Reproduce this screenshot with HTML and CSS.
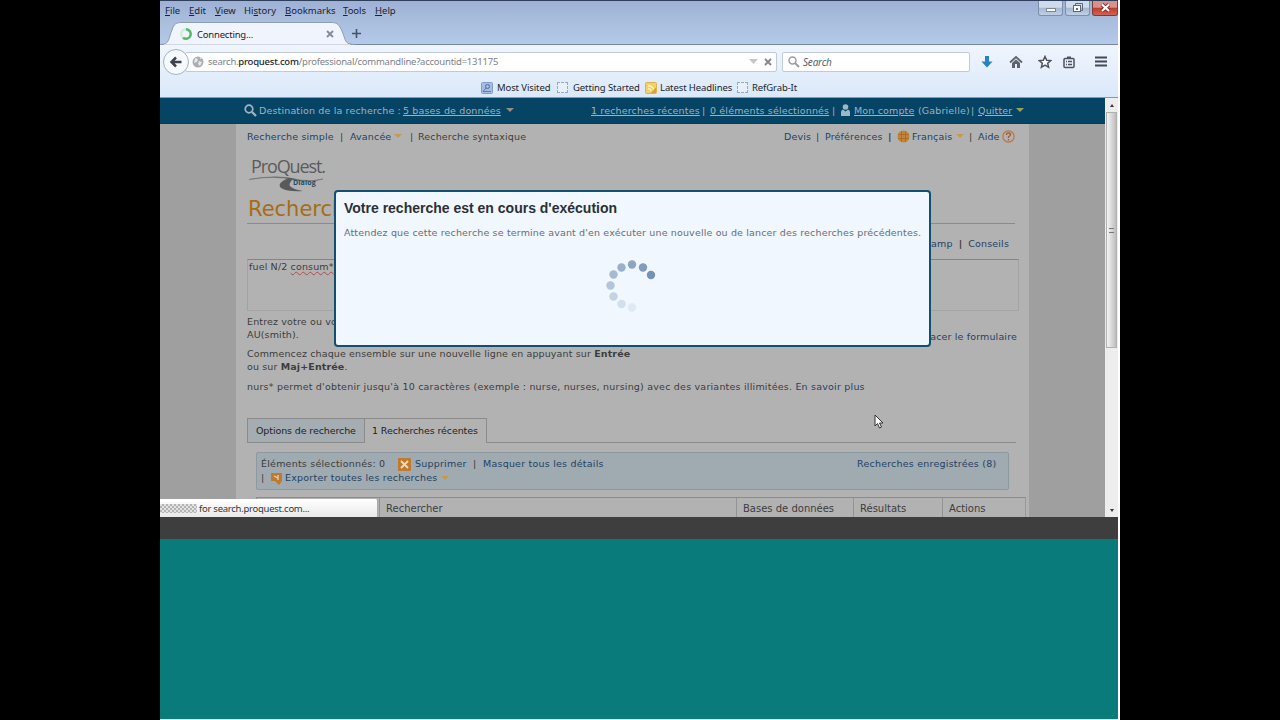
FILE: index.html
```
<!DOCTYPE html>
<html lang="fr">
<head>
    <meta charset="UTF-8">
    <title>ProQuest Dialog</title>
    <link rel="stylesheet" href="styles.css">
</head>
<body>
    <div class="screen">
        <div class="titlebar">
            <div class="menu">
                <span><u>F</u>ile</span>
                <span><u>E</u>dit</span>
                <span><u>V</u>iew</span>
                <span>Hi<u>s</u>tory</span>
                <span><u>B</u>ookmarks</span>
                <span><u>T</u>ools</span>
                <span><u>H</u>elp</span>
            </div>
            <div class="win_buttons">
                <span class="win_btn"><svg width="24" height="14"><rect x="7.500" y="7.500" width="9" height="3" fill="#fff" stroke="#7b8898"/></svg></span>
                <span class="win_btn"><svg width="24" height="14"><path d="M9.500 5V2.500h7v7H14" fill="none" stroke="#5b6878"/><rect x="7.500" y="4.500" width="7" height="6" fill="#fff" stroke="#5b6878"/><rect x="10" y="7" width="2" height="2" fill="#5b6878"/></svg></span>
                <span class="win_btn close"><svg width="25" height="14"><path d="M9 3.500l7 6.500M16 3.500l-7 6.500" stroke="#7b2c26" stroke-width="4"/><path d="M9 3.500l7 6.500M16 3.500l-7 6.500" stroke="#fff" stroke-width="2.200"/></svg></span>
            </div>
        </div>
        <div class="tabstrip">
            <svg class="tab_shape" width="195" height="23"><path d="M0 22.500C10 22.500 8 17 12 8C14 2 16 .5 22 .5H171C178 .5 179 3 182 9C186 18 184 22.500 195 22.500" fill="#f0f5fd" stroke="#8a9cb8"/><path d="M4 23h186" stroke="#f0f5fd"/></svg>
            <div class="tab">
                <svg width="14" height="14"><circle cx="7" cy="7" r="4.800" fill="none" stroke="#d3ecd9" stroke-width="2.500"/><path d="M7 2.200A4.800 4.800 0 1 1 4 10.800" fill="none" stroke="#55b96e" stroke-width="2.500"/></svg>
                <span>Connecting...</span>
                <svg width="8" height="8"><path d="M1 1l6 6M7 1L1 7" stroke="#858b96" stroke-width="1.900"/></svg>
            </div>
            <svg class="new_tab" width="9" height="9"><path d="M4.500 0v9M0 4.500h9" stroke="#465267" stroke-width="1.600"/></svg>
        </div>
        <div class="toolbar">
            <div class="back"><svg width="14" height="12"><path d="M12.500 6H3M7 1.500L2.500 6L7 10.500" fill="none" stroke="#3d434c" stroke-width="2.500"/></svg></div>
            <div class="urlbar">
                <svg width="12" height="12"><circle cx="6" cy="6" r="5.500" fill="#aaadb2"/><path d="M3 2l3 1-1 3-3 1zM7 5l3 1-2 4-2-2zM8 1l2 2-2 0z" fill="#e6e8eb"/></svg>
                <span class="url">search.<b>proquest.com</b>/professional/commandline?accountid=131175</span>
                <svg width="9" height="5"><path d="M0 0h9L4.500 5z" fill="#c3c6cb"/></svg>
                <svg class="stop" width="8" height="8"><path d="M1 1l6 6M7 1L1 7" stroke="#80858d" stroke-width="1.800"/></svg>
            </div>
            <div class="searchbar">
                <svg width="12" height="12"><circle cx="4.500" cy="4.500" r="3.500" fill="none" stroke="#999da3" stroke-width="1.500"/><path d="M7 7l4 4" stroke="#999da3" stroke-width="2"/></svg>
                <i>Search</i>
            </div>
            <div class="tools">
                <svg width="14" height="14"><path d="M5 1h4v5.500h3.500L7 12.500L1.500 6.500H5z" fill="#2684bf"/></svg>
                <svg width="14" height="14"><path d="M1 7.500L7 2l6 5.500" fill="none" stroke="#5e636b" stroke-width="1.800"/><path d="M3 8l4-3.500L11 8v5H8V9H6v4H3z" fill="#5e636b"/></svg>
                <svg width="14" height="14"><path d="M7 1.500l1.700 3.700 4 .4-3 2.700.9 4L7 10.200l-3.600 2.100.9-4-3-2.700 4-.4z" fill="#fff" stroke="#4e535b" stroke-width="1.500"/></svg>
                <svg width="14" height="14"><rect x="2" y="3.500" width="10" height="9" rx="1" fill="none" stroke="#4e535b" stroke-width="1.500"/><path d="M5 2.200h4M4 6.500h1M6 6.500h4M4 9.500h1M6 9.500h4" stroke="#4e535b" stroke-width="1.500"/></svg>
                <svg width="14" height="14"><path d="M1 2.500h12M1 6.500h12M1 10.500h12" stroke="#454a52" stroke-width="2.200"/></svg>
            </div>
        </div>
        <div class="bookmarks">
            <svg width="12" height="12"><rect x=".5" y=".5" width="11" height="11" rx="1" fill="#a5bde3" stroke="#7f9ccb"/><circle cx="6.500" cy="4.500" r="2" fill="none" stroke="#4d6c9e"/><path d="M5 6l-3 3.500h8" fill="none" stroke="#5f7dae"/></svg>
            <span>Most Visited</span>
            <i class="blank"></i>
            <span>Getting Started</span>
            <svg width="12" height="12"><rect x=".5" y=".5" width="11" height="11" rx="1" fill="#f3d063" stroke="#dcb34a"/><path d="M3 3.500a6 6 0 0 1 6 6M3 6.500a3 3 0 0 1 3 3" fill="none" stroke="#fbf0cb" stroke-width="1.300"/><path d="M5.500 11L11 5.500V11z" fill="#e0a030"/></svg>
            <span>Latest Headlines</span>
            <i class="blank"></i>
            <span>RefGrab-It</span>
        </div>

        <div class="viewport">
            <div class="content">
                <div class="topbar">
                    <svg width="13" height="13"><circle cx="5" cy="5" r="3.800" fill="none" stroke="#9fb2bf" stroke-width="1.700"/><path d="M8 8l4 4" stroke="#9fb2bf" stroke-width="2.300"/></svg>
                    <span>Destination de la recherche :</span>
                    <u>5 bases de données</u>
                    <i class="arrow"></i>
                    <u>1 recherches récentes</u>
                    <span>|</span>
                    <u>0 éléments sélectionnés</u>
                    <span>|</span>
                    <svg width="11" height="13"><circle cx="5.500" cy="3" r="2.800" fill="#9fb8c8"/><path d="M1 12V8q0-2 2-2.500l2.500 2L8 5.500q2 .5 2 2.500v4z" fill="#9fb8c8"/></svg>
                    <u>Mon compte</u>
                    <span>(Gabrielle)</span>
                    <span>|</span>
                    <u>Quitter</u>
                    <i class="arrow green"></i>
                </div>
                <div class="page">
                    <div class="links">
                        <a>Recherche simple</a><span>|</span>
                        <a>Avancée</a><i class="arrow gold"></i><span>|</span>
                        <span>Recherche syntaxique</span>
                        <a>Devis</a><span>|</span>
                        <a>Préférences</a><b>|</b>
                        <svg width="13" height="13"><circle cx="6.500" cy="6.500" r="6" fill="#c58436"/><path d="M1 4.500h11M1 8.500h11M4.500 1v11M8.500 1v11" stroke="#a5692a" stroke-width=".8"/></svg>
                        <a>Français</a><i class="arrow gold"></i><span>|</span>
                        <a>Aide</a>
                        <svg class="help" width="13" height="13"><circle cx="6.500" cy="6.500" r="5.600" fill="none" stroke="#bc7443" stroke-width="1.200"/><path d="M4.500 5q0-2 2-2t2 1.700q0 1-2 2v1.300M6.500 9v1.500" fill="none" stroke="#ad5c2b" stroke-width="1.400"/></svg>
                    </div>
                    <div class="logo">
                        <span class="brand">ProQuest.</span>
                        <svg width="76" height="18"><path d="M0 4.500Q28-1 51 5q12 2 23-1Q60 8 46 5Q26 0 0 4.500z" fill="#686868" stroke="#686868" stroke-width=".5"/><path d="M40 3Q27 8 32 13q7 4 22 3Q38 13 41 8q1-3 4-4z" fill="#585a5c"/></svg>
                        <b class="dialog">Dialog</b>
                    </div>
                    <h1>Recherche syntaxique</h1>
                    <div class="sublinks"><a>Champ</a><b>|</b><a>Conseils</a></div>
                    <div class="query">fuel N/2 <span class="typo">consum*</span></div>
                    <div class="hints">
                        <div class="hint_text">
                            <p>Entrez votre ou vos termes<br>AU(smith).</p>
                            <p class="tight">Commencez chaque ensemble sur une nouvelle ligne en appuyant sur <b>Entrée</b><br>ou sur <b>Maj+Entrée</b>.</p>
                            <p class="wide">nurs* permet d'obtenir jusqu'à 10 caractères (exemple : nurse, nurses, nursing) avec des variantes illimitées. <a>En savoir plus</a></p>
                        </div>
                        <a class="clear">Effacer le formulaire</a>
                    </div>
                    <div class="tabs">
                        <div class="t off">Options de recherche</div>
                        <div class="t on">1 Recherches récentes</div>
                        <div class="rest"></div>
                    </div>
                    <div class="actions">
                        <div class="row">
                            <span>Éléments sélectionnés: 0</span>
                            <svg width="13" height="13"><rect width="13" height="13" rx="1" fill="#c07a2c"/><path d="M3 3l7 7M10 3l-7 7" stroke="#e4dccf" stroke-width="1.800"/></svg>
                            <a>Supprimer</a>
                            <span>|</span>
                            <a>Masquer tous les détails</a>
                            <a class="saved">Recherches enregistrées (8)</a>
                        </div>
                        <div class="row second">
                            <span>|</span>
                            <svg width="12" height="13"><path d="M0 1h11v8H0z" fill="#bd7a30"/><path d="M3 4l4 2M7 3v5" stroke="#e2d2bd" stroke-width="1.300"/><path d="M4 9h7l-3 4z" fill="#bd7a30"/></svg>
                            <a>Exporter toutes les recherches</a>
                            <i class="arrow gold"></i>
                        </div>
                    </div>
                    <div class="table">
                        <span></span><span>Rechercher</span><span>Bases de données</span><span>Résultats</span><span>Actions</span>
                    </div>
                </div>
            </div>
            <div class="scrollbar">
                <i class="up"></i>
                <div class="thumb"><i></i></div>
                <i class="down"></i>
            </div>

            <div class="modal">
                <h2>Votre recherche est en cours d'exécution</h2>
                <p>Attendez que cette recherche se termine avant d'en exécuter une nouvelle ou de lancer des recherches précédentes.</p>
                <svg width="52" height="54" fill="#7492b4">
                    <circle cx="45" cy="17" r="4.200"/>
                    <circle cx="37" cy="9.500" r="4.200" opacity=".9"/>
                    <circle cx="26" cy="6.500" r="4.200" opacity=".8"/>
                    <circle cx="15.500" cy="9.500" r="4.200" opacity=".7"/>
                    <circle cx="7.500" cy="16.500" r="4.200" opacity=".6"/>
                    <circle cx="4.500" cy="27.500" r="4.200" opacity=".5"/>
                    <circle cx="7.500" cy="38.500" r="4.200" opacity=".36"/>
                    <circle cx="15.500" cy="46" r="4.200" opacity=".24"/>
                    <circle cx="26" cy="49.500" r="4.200" opacity=".14"/>
                </svg>
            </div>
            <div class="status"><i></i>for search.proquest.com...</div>
            <svg class="cursor" width="10" height="15"><path d="M1 1v11l2.500-2.500L5.500 14l2-1-2-4H9z" fill="#fff" stroke="#333"/></svg>
        </div>
        <div class="band"></div>
        <div class="desk"></div>
    </div>
</body>
</html>
```

FILE: styles.css
```
* {
    box-sizing: border-box;
}
body {
    margin: 0;
    height: 720px;
    background-color: #000;
    overflow: hidden;
}
svg {
    display: block;
    flex-shrink: 0;
}
.screen {
    width: 960px;
    height: 720px;
    margin: 0 auto;
    border-right: 2px solid #fff;
    border-bottom: 1px solid #fff;
    background-color: #b1c8e7;
    font-family: "Noto Sans", sans-serif;
    font-size: 10px;
    color: #1c222b;
    white-space: nowrap;
    overflow: hidden;
}

/* browser chrome */
.titlebar {
    height: 22px;
    border-top: 1px solid #2e3f5b;
    background: linear-gradient(#9fb1d6, #a9bedd);
    display: flex;
    justify-content: space-between;
}
.menu {
    display: grid;
    grid-template-columns: 24px 26px 29px 41px 58px 32px 30px;
    padding-left: 5px;
    line-height: 19px;
    font-size: 9.5px;
}
.win_buttons {
    display: flex;
    gap: 2px;
    height: 15px;
}
.win_btn {
    width: 25px;
    border: 1px solid #7d8fa9;
    border-top: none;
    background: linear-gradient(#cfdbeb 45%, #a5b8d1 50%, #c0d0e5);
    border-radius: 0 0 3px 3px;
}
.win_btn.close {
    width: 26px;
    border-color: #7c3a3a;
    background: linear-gradient(#d9928a 45%, #bc3b2c 50%, #d26454);
}
.tabstrip {
    position: relative;
    height: 23px;
    background: linear-gradient(#a9bedd, #b5caea);
    border-bottom: 1px solid #7387a5;
}
.tab_shape {
    position: absolute;
    left: 0;
    top: 0;
}
.tab {
    position: relative;
    width: 176px;
    height: 23px;
    padding: 1px 2px 0 19px;
    display: flex;
    align-items: center;
}
.tab span {
    flex: 1;
    margin-left: 4px;
    font-size: 9.5px;
    letter-spacing: -.2px;
}
.new_tab {
    position: absolute;
    left: 192px;
    top: 7px;
}
.toolbar {
    height: 33px;
    background: linear-gradient(#f0f5fd, #e2edfb);
    display: flex;
    align-items: center;
    padding-left: 3px;
}
.back {
    position: relative;
    width: 26px;
    height: 26px;
    border: 1px solid #a6b2c4;
    border-radius: 50%;
    background-color: #f6f9fe;
    display: flex;
    align-items: center;
    justify-content: center;
    z-index: 1;
}
.urlbar,
.searchbar {
    height: 20px;
    border: 1px solid #c1cad8;
    border-radius: 2px;
    background-color: #fff;
    display: flex;
    align-items: center;
}
.urlbar {
    width: 592px;
    margin-left: -4px;
    padding: 0 4px 0 6px;
    color: #7d8188;
}
.url {
    flex: 1;
    margin-left: 4px;
    font-size: 9.5px;
    letter-spacing: -.23px;
}
.url b {
    color: #22262c;
    font-weight: 500;
}
.stop {
    margin-left: 6px;
}
.searchbar {
    width: 188px;
    margin-left: 5px;
    padding-left: 5px;
    color: #5b6068;
}
.searchbar i {
    margin-left: 3px;
    letter-spacing: -.2px;
}
.tools {
    display: grid;
    grid-template-columns: 29px 29px 24px 32px 14px;
    margin-left: 10px;
}
.bookmarks {
    height: 20px;
    background: linear-gradient(#e2edfb, #dae8f9);
    border-bottom: 1px solid #8a97a4;
    padding-left: 321px;
    display: grid;
    grid-template-columns: 16px 60px 16px 72px 15px 77px 15px 60px;
    align-items: center;
    font-size: 9.5px;
    letter-spacing: -.1px;
    color: #22252a;
}
.blank {
    width: 11px;
    height: 11px;
    border: 1px dashed #9aa8bd;
    background-color: #e8f0fa;
}

/* page */
.viewport {
    position: relative;
    height: 419px;
    display: flex;
    overflow: hidden;
    font-family: "DejaVu Sans", sans-serif;
    font-size: 9.5px;
    letter-spacing: .15px;
}
.content {
    width: 945px;
    background-color: #9f9f9f;
}
.topbar {
    height: 26px;
    background-color: #064466;
    border-bottom: 1px solid #0b3854;
    padding: 0 0 1px 84px;
    display: grid;
    grid-template-columns: 15px 144px 103px 85px 111px 8px 122px 8px 14px 64px 53px 7px 38px 10px;
    align-items: center;
    color: #9fb2bf;
}
.arrow {
    width: 8px;
    border: 4px solid transparent;
    border-top: 4px solid #a08c74;
    border-bottom: none;
}
.arrow.green {
    border-top-color: #98a05a;
}
.arrow.gold {
    border-top-color: #c59a4c;
}
.page {
    width: 793px;
    height: 393px;
    margin-left: 76px;
    padding: 4px 12px 0 11px;
    background-color: #b2b2b2;
    color: #3d3d3d;
    overflow: hidden;
}
a {
    color: #1f4263;
}
.links {
    height: 16px;
    display: grid;
    grid-template-columns: 93px 10px 44px 16px 8px 366px 32px 9px 63px 9px 15px 44px 13px 9px 24px 13px;
    align-items: center;
}
.logo {
    position: relative;
    height: 47px;
    padding-top: 9px;
}
.brand {
    display: block;
    width: 80px;
    padding-left: 4px;
    font: 18px/26px "Open Sans", sans-serif;
    letter-spacing: -1.1px;
    color: #5c5c5c;
}
.logo svg {
    position: absolute;
    left: 2px;
    top: 31px;
}
.dialog {
    position: absolute;
    left: 46px;
    top: 34px;
    font: bold 7px/10px "Open Sans", sans-serif;
    color: #1c4c61;
}
h1 {
    width: 768px;
    height: 33px;
    margin: 0;
    padding: 5px 0 0 1px;
    border-bottom: 1px solid #8b8b8b;
    font-size: 21px;
    line-height: 26px;
    font-weight: normal;
    letter-spacing: 0;
    color: #a66d16;
}
.sublinks {
    height: 35px;
    display: flex;
    justify-content: flex-end;
    gap: 6px;
    padding-right: 8px;
    line-height: 39px;
}
.query {
    width: 772px;
    height: 52px;
    border: 1px solid #a3a3a3;
    border-top-color: #858585;
    padding-left: 1px;
    line-height: 14px;
}
.typo {
    text-decoration: underline wavy #b04a4a 1px;
}
.hints {
    height: 107px;
    padding-top: 4px;
    display: flex;
    justify-content: space-between;
    line-height: 13px;
}
.hints p {
    margin: 0 0 6px;
}
.hints .tight {
    letter-spacing: .13px;
    margin-bottom: 7px;
}
.hints .wide {
    letter-spacing: .21px;
}
.clear {
    margin-top: 15px;
}
.hint_text {
    width: 640px;
}
.tabs {
    display: flex;
    height: 25px;
    line-height: 23px;
    letter-spacing: -.11px;
    color: #222;
}
.t {
    border: 1px solid #8b8b8b;
}
.off {
    width: 118px;
    padding-left: 8px;
    background-color: #a5adb3;
}
.on {
    width: 122px;
    padding-left: 7px;
    border-bottom: none;
    border-left: none;
}
.rest {
    width: 529px;
    border-bottom: 1px solid #8b8b8b;
}
.actions {
    width: 753px;
    height: 38px;
    margin: 9px 0 7px 9px;
    padding: 4px 0 0 4px;
    border: 1px solid #8d989f;
    border-radius: 2px;
    background-color: #9faab1;
    line-height: 14px;
    letter-spacing: .22px;
}
.row {
    height: 14px;
    display: grid;
    grid-template-columns: 137px 17px 58px 10px 374px 150px;
    align-items: center;
}
.row.second {
    grid-template-columns: 10px 14px 156px 10px;
}
.table {
    width: 770px;
    margin-left: 9px;
    height: 24px;
    border: 1px solid #8b8b8b;
    border-right-color: #999;
    display: grid;
    grid-template-columns: 123px 357px 117px 89px 82px;
    line-height: 21px;
    font-size: 10px;
    letter-spacing: 0;
}
.table span {
    padding-left: 6px;
    border-right: 1px solid #939393;
}
.table span:last-child {
    border-right: none;
}
.scrollbar {
    width: 13px;
    background-color: #ededed;
    display: flex;
    flex-direction: column;
    align-items: center;
}
.up,
.down {
    margin-top: 6px;
    border: 2.5px solid transparent;
    border-top: none;
    border-bottom: 3px solid #333;
}
.down {
    margin-top: auto;
    margin-bottom: 5px;
    border-top: 3px solid #333;
    border-bottom: none;
}
.thumb {
    width: 11px;
    height: 236px;
    margin-top: 5px;
    border: 1px solid #b0b0b0;
    background: linear-gradient(90deg, #f4f4f4, #d9d9d9 50%, #bcbcbc);
    display: flex;
    align-items: center;
    justify-content: center;
}
.thumb i {
    width: 5px;
    height: 5px;
    border: 1px solid #777;
    border-width: 1px 0;
}

.modal {
    position: absolute;
    left: 174px;
    top: 92px;
    width: 597px;
    height: 157px;
    padding: 8px 8px 0;
    border: 2px solid #11506f;
    border-radius: 4px;
    background-color: #f0f7fe;
}
.modal h2 {
    margin: 0;
    font: bold 14px/16px "Liberation Sans", sans-serif;
    letter-spacing: 0;
    color: #2c2f35;
}
.modal p {
    margin: 10px 0 0;
    line-height: 13px;
    color: #696e75;
}
.modal svg {
    margin: 19px 0 0 262px;
}
.status {
    position: absolute;
    left: 0;
    bottom: 0;
    width: 218px;
    height: 18px;
    padding-top: 1px;
    background: linear-gradient(#fff, #e9e9e9);
    border-right: 1px solid #aaa;
    border-top-right-radius: 2px;
    display: flex;
    align-items: center;
    font-family: "Noto Sans", sans-serif;
    font-size: 9.5px;
    letter-spacing: -.26px;
    color: #33363a;
}
.status i {
    width: 37px;
    height: 9px;
    margin-right: 2px;
    background: repeating-conic-gradient(#b4b4b4 0 25%, #e2e2e2 0 50%) 0 0 / 4px 4px;
}
.cursor {
    position: absolute;
    left: 714px;
    top: 316px;
}
.band {
    height: 22px;
    background-color: #3e3e3f;
}
.desk {
    height: 181px;
    background-color: #0a7b7b;
}
```
